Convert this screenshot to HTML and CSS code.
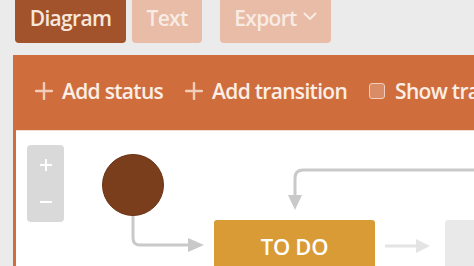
FILE: index.html
```html
<!DOCTYPE html>
<html>
<head>
<meta charset="utf-8">
<link rel="stylesheet" href="styles.css">
</head>
<body>
<div class="tabs">
  <div class="tab tab-active">Diagram</div>
  <div class="tab tab-light">Text</div>
  <div class="tab tab-light tab-export">Export <svg class="chev" width="14" height="9" viewBox="0 0 14 9"><path d="M1.5 1.5 L7 7 L12.5 1.5" fill="none" stroke="currentColor" stroke-width="2" stroke-linecap="round" stroke-linejoin="round"/></svg></div>
</div>
<div class="panel">
  <div class="toolbar">
    <div class="tool"><svg class="plus" width="18" height="18" viewBox="0 0 18 18"><path d="M9 1 V17 M1 9 H17" stroke="currentColor" stroke-width="2.4" stroke-linecap="round"/></svg><span>Add status</span></div>
    <div class="tool"><svg class="plus" width="18" height="18" viewBox="0 0 18 18"><path d="M9 1 V17 M1 9 H17" stroke="currentColor" stroke-width="2.4" stroke-linecap="round"/></svg><span>Add transition</span></div>
    <div class="tool"><span class="check"></span><span>Show transitions</span></div>
  </div>
  <div class="canvas">
    <svg class="edges" width="474" height="140" viewBox="0 0 474 140">
      <path d="M117 85 V108 Q117 115 124 115 H174" fill="none" stroke="#c9c9c9" stroke-width="3"/>
      <polygon points="172,108 188,115 172,122" fill="#c9c9c9"/>
      <path d="M470 40 H287 Q279 40 279 48 V66" fill="none" stroke="#c9c9c9" stroke-width="3"/>
      <polygon points="272,65 286,65 279,80" fill="#c9c9c9"/>
      <path d="M369 116 H402" fill="none" stroke="#e4e4e4" stroke-width="3"/>
      <polygon points="400,109 414,116 400,123" fill="#e4e4e4"/>
    </svg>
    <div class="zoomctl">
      <svg class="zicon" width="14" height="14" viewBox="0 0 14 14"><path d="M7 1 V13 M1 7 H13" stroke="#fff" stroke-width="2"/></svg>
      <svg class="zicon" width="14" height="14" viewBox="0 0 14 14"><path d="M1 7 H13" stroke="#fff" stroke-width="2"/></svg>
    </div>
    <div class="node-start"></div>
    <div class="node-status todo">TO DO</div>
    <div class="node-status next"></div>
  </div>
</div>
</body>
</html>
```
FILE: styles.css
```css
html, body {
  margin: 0;
  padding: 0;
}
body {
  background: #ebebeb;
  font-family: "Open Sans", "Noto Sans", sans-serif;
  width: 474px;
  height: 266px;
  overflow: hidden;
}
.tabs {
  display: flex;
  padding-left: 15px;
  height: 43px;
  align-items: stretch;
}
.tab {
  display: flex;
  align-items: center;
  justify-content: center;
  font-weight: 600;
  font-size: 21px;
  letter-spacing: -0.7px;
  border-radius: 0 0 4px 4px;
  padding-bottom: 7px;
  box-sizing: border-box;
}
.tab-active {
  width: 111px;
  background: #a3532b;
  color: #f6e6dc;
}
.tab-light {
  width: 70px;
  margin-left: 6px;
  background: #e8bca7;
  color: #f8ebe3;
}
.tab-export {
  width: 111px;
  margin-left: 18px;
}
.chev {
  margin-left: 6px;
  margin-top: -4px;
}
.panel {
  margin-top: 12px;
  margin-left: 13px;
  background: #cf6d3c;
  padding-left: 3px;
  height: 220px;
}
.toolbar {
  height: 75px;
  display: flex;
  align-items: center;
  padding-left: 19px;
  padding-bottom: 3px;
  box-sizing: border-box;
  gap: 22px;
  white-space: nowrap;
  color: #fbeee6;
  font-weight: 600;
  font-size: 21px;
  letter-spacing: -0.7px;
}
.tool {
  display: flex;
  align-items: center;
  gap: 9px;
}
.plus {
  color: #f2cdb9;
}
.check {
  width: 14px;
  height: 14px;
  border: 1.5px solid #f2cdb9;
  border-radius: 3px;
  background: #d98c66;
  margin-right: 1px;
}
.canvas {
  position: relative;
  background: #fff;
  height: 145px;
  border-top: 1px solid #f4ddd0;
  overflow: hidden;
}
.edges {
  position: absolute;
  left: 0;
  top: -1px;
}
.zoomctl {
  position: absolute;
  left: 11px;
  top: 14px;
  width: 37px;
  height: 77px;
  background: #d9d9d9;
  border-radius: 4px;
  display: flex;
  flex-direction: column;
  align-items: center;
  justify-content: center;
  gap: 23px;
  padding-bottom: 1px;
  box-sizing: border-box;
}
.node-start {
  position: absolute;
  left: 86px;
  top: 23px;
  width: 60px;
  height: 60px;
  border-radius: 50%;
  background: #7a3e1c;
  border: 0.5px solid #6a3214;
}
.node-status {
  position: absolute;
  top: 89px;
  height: 52px;
  border-radius: 3px;
}
.todo {
  left: 198px;
  width: 161px;
  background: #d99b35;
  color: #fff;
  font-weight: 600;
  font-size: 22px;
  letter-spacing: -0.3px;
  display: flex;
  align-items: center;
  justify-content: center;
}
.next {
  left: 429px;
  width: 60px;
  background: #e9e9e9;
}
```
